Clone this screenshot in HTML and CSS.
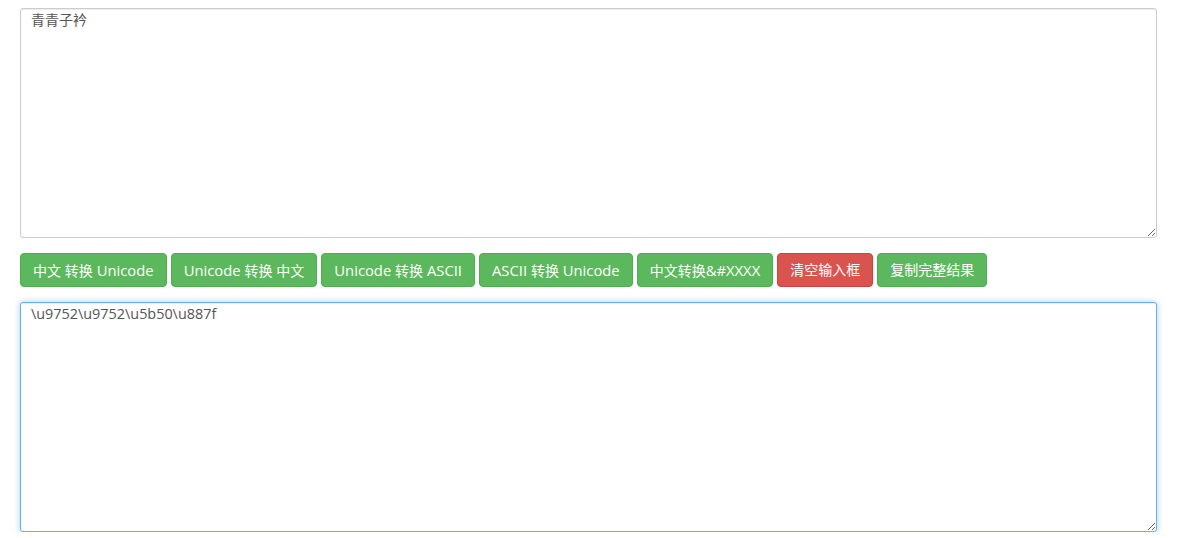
FILE: index.html
```html
<!DOCTYPE html>
<html lang="zh-CN">
<head>
<meta charset="utf-8">
<title>Unicode 转换</title>
<link rel="stylesheet" href="styles.css">
</head>
<body>
<div class="page">
  <textarea class="field field-input">青青子衿</textarea>
  <div class="actions">
    <button class="btn btn-success" type="button">中文<span class="lat"> </span>转换<span class="lat"> Unicode</span></button>
    <button class="btn btn-success" type="button"><span class="lat">Unicode </span>转换<span class="lat"> </span>中文</button>
    <button class="btn btn-success" type="button"><span class="lat">Unicode </span>转换<span class="lat"> ASCII</span></button>
    <button class="btn btn-success" type="button"><span class="lat">ASCII </span>转换<span class="lat"> Unicode</span></button>
    <button class="btn btn-success" type="button">中文转换<span class="lat">&amp;#XXXX</span></button>
    <button class="btn btn-danger" type="button">清空输入框</button>
    <button class="btn btn-success" type="button">复制完整结果</button>
  </div>
  <textarea class="field field-output">\u9752\u9752\u5b50\u887f</textarea>
</div>
</body>
</html>
```
FILE: styles.css
```css
html, body {
  margin: 0;
  padding: 0;
  background: #fff;
}
.page {
  padding: 8px 32px 0 20px;
  display: flex;
  flex-direction: column;
  font-family: "Open Sans", "Noto Sans CJK SC", sans-serif;
}
.field {
  box-sizing: border-box;
  display: block;
  width: 1137px;
  height: 230px;
  margin: 0;
  padding: 1px 10px;
  font-family: "Open Sans", "Noto Sans CJK SC", sans-serif;
  font-size: 14px;
  line-height: 20px;
  color: #555;
  background: #fff;
  border: 1px solid #ccc;
  border-radius: 3px;
  box-shadow: inset 0 1px 1px rgba(0,0,0,.075);
  outline: none;
  resize: both;
}
.field-output {
  font-size: 14.4px;
  border-color: #66afe9;
  box-shadow: inset 0 1px 1px rgba(0,0,0,.075), 0 0 6px rgba(102,175,233,.6);
}
.actions {
  display: flex;
  gap: 4px;
  margin: 15px 0 15px;
}
.btn {
  box-sizing: border-box;
  height: 34px;
  padding: 6px 12px;
  font-family: "Open Sans", "Noto Sans CJK SC", sans-serif;
  font-size: 14px;
  line-height: 20px;
  color: #fff;
  border: 1px solid transparent;
  border-radius: 4px;
  cursor: pointer;
  white-space: nowrap;
}
.lat {
  font-size: 14.8px;
}
.btn-success {
  background: #5cb85c;
  border-color: #4cae4c;
}
.btn-danger {
  background: #d9534f;
  border-color: #d43f3a;
}
```
